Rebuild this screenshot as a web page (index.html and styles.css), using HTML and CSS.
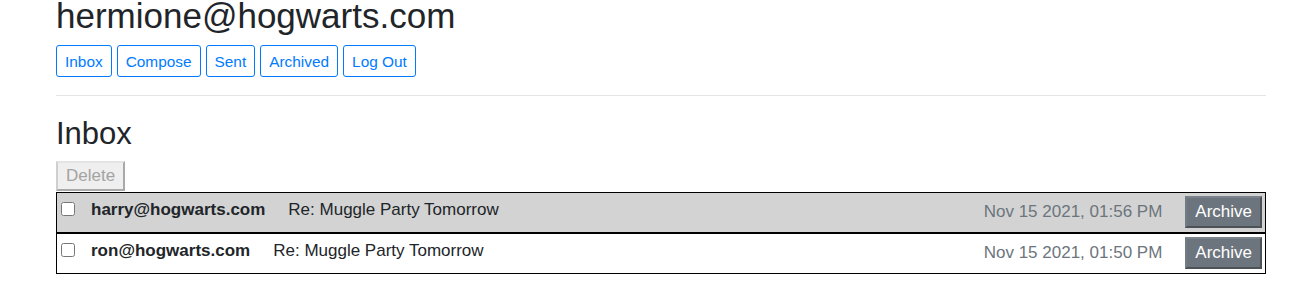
FILE: index.html
```html
<!DOCTYPE html>
<html lang="en">
<head>
<meta charset="utf-8">
<title>Mail</title>
<link rel="stylesheet" href="styles.css">
</head>
<body>
<div class="container">
  <h2 class="user">hermione@hogwarts.com</h2>
  <nav class="nav">
    <button class="nav-btn">Inbox</button>
    <button class="nav-btn">Compose</button>
    <button class="nav-btn">Sent</button>
    <button class="nav-btn">Archived</button>
    <button class="nav-btn">Log Out</button>
  </nav>
  <hr class="rule">
  <h3 class="mailbox-title">Inbox</h3>
  <button class="delete-btn" disabled>Delete</button>
  <div class="emails">
    <div class="email read">
      <div class="email-left">
        <input type="checkbox" class="check">
        <span class="sender">harry@hogwarts.com</span>
        <span class="subject">Re: Muggle Party Tomorrow</span>
      </div>
      <span class="date">Nov 15 2021, 01:56 PM</span>
      <button class="archive-btn">Archive</button>
    </div>
    <div class="email">
      <div class="email-left">
        <input type="checkbox" class="check">
        <span class="sender">ron@hogwarts.com</span>
        <span class="subject">Re: Muggle Party Tomorrow</span>
      </div>
      <span class="date">Nov 15 2021, 01:50 PM</span>
      <button class="archive-btn">Archive</button>
    </div>
  </div>
</div>
</body>
</html>
```

FILE: styles.css
```css
html, body {
  margin: 0;
  padding: 0;
  background: #fff;
}
body {
  font-family: "Liberation Sans", Arial, sans-serif;
  font-size: 17px;
  line-height: 20px;
  color: #212529;
}
.container {
  padding: 0 50px 0 56px;
}
.user {
  margin: 0 0 13px 0;
  font-size: 35px;
  line-height: 32px;
  font-weight: 400;
}
.nav {
  display: flex;
  gap: 5px;
}
.nav-btn {
  font-family: inherit;
  font-size: 15.4px;
  line-height: 22px;
  padding: 5px 8px 3px 8px;
  color: #007bff;
  background: #fff;
  border: 1px solid #007bff;
  border-radius: 3px;
  margin: 0;
}
.rule {
  margin: 18px 0 0 0;
  border: 0;
  border-top: 1px solid #e5e5e5;
  height: 0;
}
.mailbox-title {
  margin: 22px 0 12px 0;
  font-size: 31px;
  line-height: 31px;
  font-weight: 400;
}
.delete-btn {
  display: block;
  font-family: inherit;
  font-size: 17px;
  line-height: 20px;
  padding: 3px 8px;
  margin: 0 0 1px 0;
  color: #a3a3a3;
  background: #efefef;
  border: 2px solid;
  border-color: #e4e4e4 #a9a9a9 #a9a9a9 #cfcfcf;
}
.emails {
  display: flex;
  flex-direction: column;
}
.email {
  display: flex;
  align-items: center;
  border: 1px solid #000;
  padding: 3px 0 4px 0;
  background: #fff;
}
.email.read {
  background: #d3d3d3;
}
.email-left {
  flex: 1;
  align-self: flex-start;
  padding-top: 4px;
  display: flex;
  align-items: baseline;
}
.check {
  width: 14px;
  height: 14px;
  margin: 2px 3px 0 4px;
  align-self: flex-start;
  border-radius: 3px;
}
.sender {
  font-weight: 700;
  margin-left: 13px;
}
.subject {
  margin-left: 23px;
}
.date {
  color: #6c757d;
  margin-right: 23px;
}
.archive-btn {
  font-family: inherit;
  font-size: 17px;
  line-height: 20px;
  padding: 4px 8px;
  margin: 0 3px 0 0;
  color: #fff;
  background: #6c757d;
  border: 2px solid;
  border-color: #7a838b #4c5257 #4c5257 #737b83;
}
```
